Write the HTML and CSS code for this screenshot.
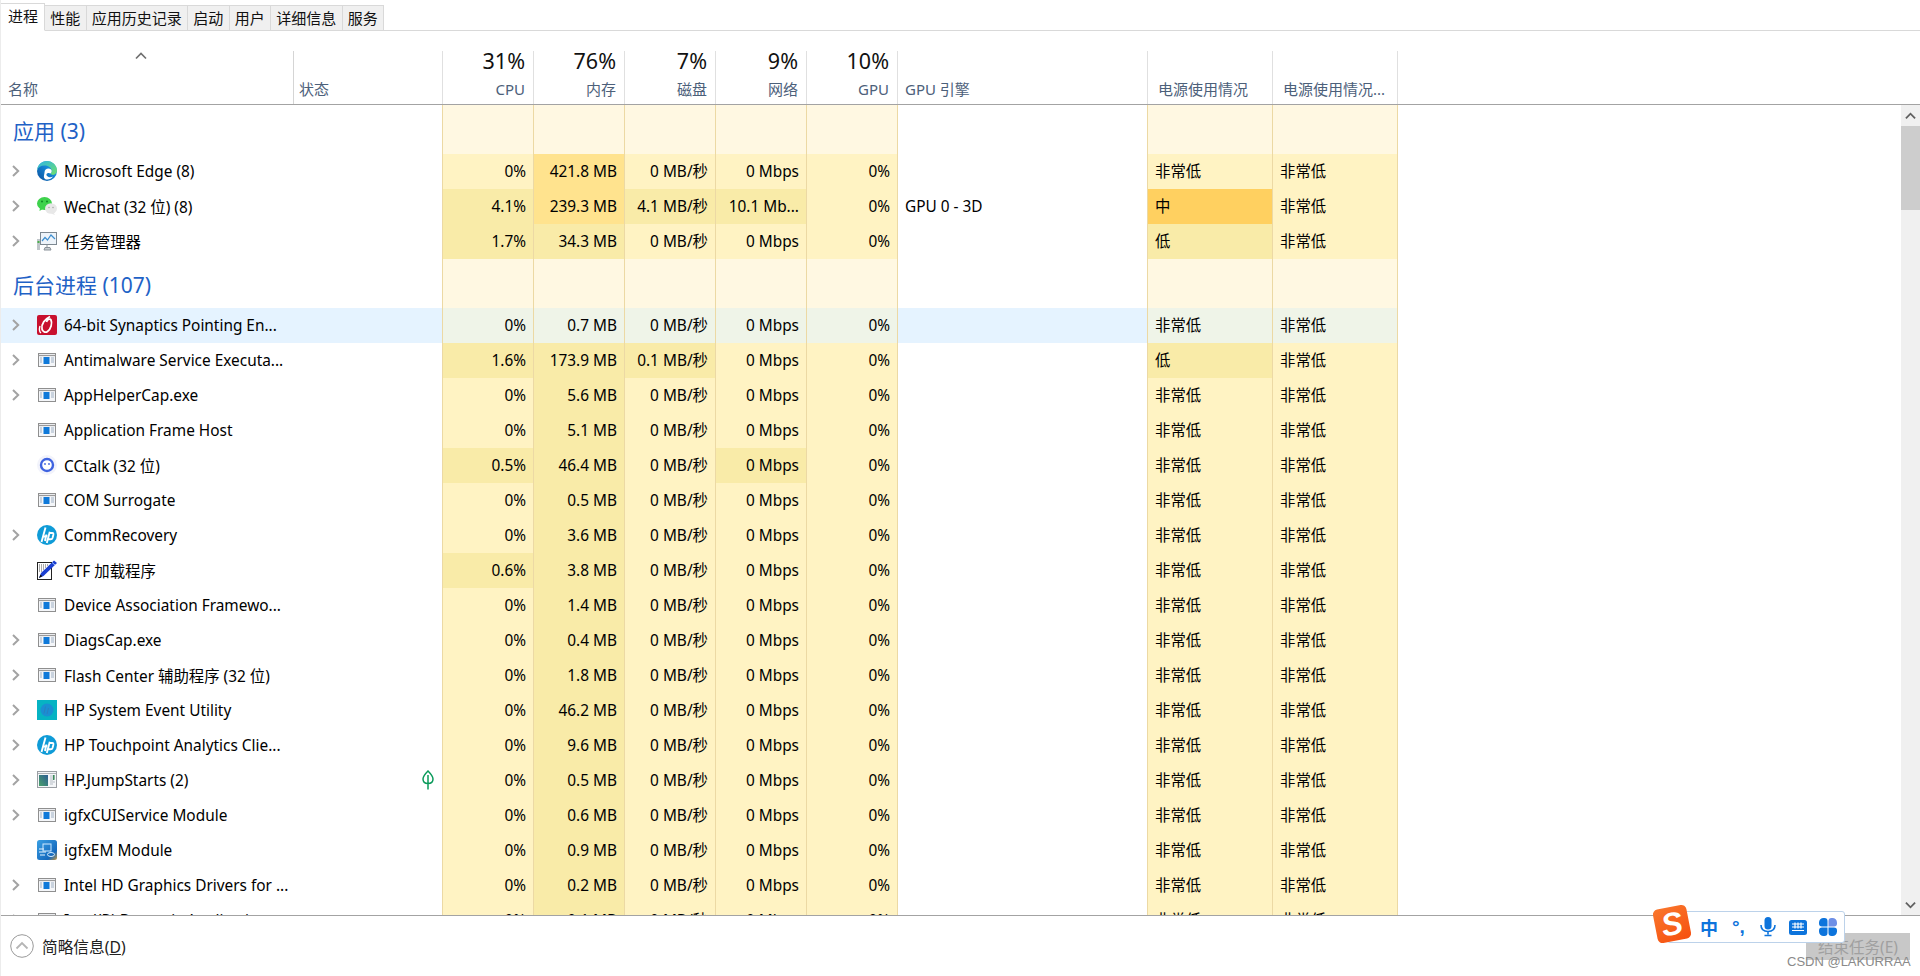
FILE: index.html
```html
<!DOCTYPE html>
<html lang="zh-CN">
<head>
<meta charset="utf-8">
<title>任务管理器</title>
<link rel="stylesheet" href="styles.css">
</head>
<body>
<svg class="defs" width="0" height="0">
  <defs>
    <linearGradient id="g-edge" x1="0" y1="1" x2="1" y2="0"><stop offset="0" stop-color="#0b4f9c"/><stop offset=".6" stop-color="#1689d8"/><stop offset="1" stop-color="#2fb8e6"/></linearGradient>
    <linearGradient id="g-edge2" x1="0" y1="0" x2="1" y2="1"><stop offset="0" stop-color="#2fb5e8"/><stop offset="1" stop-color="#6fe06a"/></linearGradient>
    <linearGradient id="g-jump" x1="0" y1="1" x2="1" y2="0"><stop offset="0" stop-color="#4aa06a"/><stop offset="1" stop-color="#2c5d92"/></linearGradient>
    <linearGradient id="g-igfx" x1="0" y1="0" x2="1" y2="1"><stop offset="0" stop-color="#3aa0e4"/><stop offset=".75" stop-color="#1569bd"/><stop offset="1" stop-color="#c9953a"/></linearGradient>
    <symbol id="chev" viewBox="0 0 10 14"><path d="M2 2l5.2 5L2 12" fill="none" stroke="#a3a3a3" stroke-width="2"/></symbol>
    <symbol id="i-win" viewBox="0 0 20 20">
      <rect x="1.500" y="3.500" width="17" height="13" fill="#f4f6f9" stroke="#8f8f8f"/>
      <path d="M1.500 5.500h17" stroke="#9a9a9a" stroke-width="1.200"/>
      <rect x="6.500" y="7" width="6" height="7" fill="#0f79d9"/>
      <path d="M3 8h2M3 10h2M3 12h2M14 8h3M14 10h3M14 12h3" stroke="#9fb0c4"/>
    </symbol>
    <symbol id="i-edge" viewBox="0 0 20 20">
      <circle cx="10" cy="10" r="10" fill="url(#g-edge)"/>
      <path d="M10 0C4.500 0 .4 4 0 9.500c1-3.200 4-5 7.500-5 4.500 0 7.200 2.700 7.200 5.500 0 1-.5 2-1.400 2.800 1 1 2.500 1.400 3.700 1 1.800-.7 3-2.300 3-4.800C20 4.500 15.500 0 10 0z" fill="url(#g-edge2)"/>
      <path d="M7.500 11.500c0-2.500 1.800-4 4-4 1.800 0 3.200 1.200 3.200 2.500 0 2-1.600 2.600-1.600 2.600s-1-.8-2.600-.4c-1.200.3-1.500 1.600-.4 2.800 1.500 1.500 4 1.800 6 .6-1.800 2.300-4.500 3.400-7.200 2.800C5.500 17 7.500 13.500 7.500 11.500z" fill="#fff"/>
    </symbol>
    <symbol id="i-wechat" viewBox="0 0 20 20">
      <ellipse cx="7.500" cy="7.500" rx="7.500" ry="6.500" fill="#3ed24c"/>
      <path d="M3 11.500l-.5 3.500 4-2.500z" fill="#3ed24c"/>
      <circle cx="5" cy="5.500" r="1" fill="#0f8a25"/><circle cx="10" cy="5.500" r="1" fill="#0f8a25"/>
      <ellipse cx="14" cy="12.500" rx="6" ry="5.200" fill="#e8e8e8"/>
      <path d="M16.500 16.500l1.500 2.500-4-1.500z" fill="#e8e8e8"/>
      <circle cx="12" cy="11.500" r=".8" fill="#aaa"/><circle cx="16" cy="11.500" r=".8" fill="#aaa"/>
    </symbol>
    <symbol id="i-tm" viewBox="0 0 20 20">
      <rect x="3.500" y="1.500" width="16" height="12" fill="#eef4fa" stroke="#7d8891"/>
      <path d="M5 10l3-3.500 2.500 2.500L14 4l4 4" fill="none" stroke="#3f8fd0" stroke-width="1.200"/>
      <path d="M10 13.500v3M7 19h7l-1-2.500H8z" stroke="#8a9299" fill="#c9ced2"/>
      <rect x="0" y="8" width="3" height="11" fill="#bfc5c9"/><rect x="0.500" y="10" width="2" height="2" fill="#48b04a"/>
    </symbol>
    <symbol id="i-syn" viewBox="0 0 20 20">
      <rect width="20" height="20" rx="2" fill="#c8102e"/>
      <path d="M13 1.500C8 4 4 9 5 14c.6 3 3.500 4 5.500 2.500C14 14 15.500 8 14 5c-1-2-3.500-.5-4.500 2" fill="none" stroke="#fff" stroke-width="1.800"/>
      <path d="M4 18c-2-1.500-2-4-1-7" fill="none" stroke="#fff" stroke-width="1.400"/>
    </symbol>
    <symbol id="i-cc" viewBox="0 0 20 20">
      <circle cx="10" cy="10" r="10" fill="#f2f3fb"/>
      <circle cx="10" cy="10" r="6" fill="#fff" stroke="#3f63e0" stroke-width="2.400"/>
      <circle cx="8" cy="9" r=".9" fill="#3f63e0"/><circle cx="12" cy="9" r=".9" fill="#3f63e0"/>
    </symbol>
    <symbol id="i-hp" viewBox="0 0 20 20">
      <circle cx="10" cy="10" r="10" fill="#0f9bd7"/>
      <path d="M8.500 2.500L4.500 17M5.900 11.500h2.600c1.300 0 1-1 .8-1.800L8 16M12.800 6.800L9.800 18M12.500 8h2.800c1.200 0 1.200 1 1 2l-.8 3c-.3 1-.8 1.300-1.800 1.300h-2.200" fill="none" stroke="#fff" stroke-width="1.900"/>
    </symbol>
    <symbol id="i-ctf" viewBox="0 0 20 20">
      <rect x=".5" y="2.500" width="14" height="17" fill="#fff" stroke="#222"/>
      <path d="M2 5h10M2 7h8M2 9h6M2 11h4" stroke="#555" stroke-dasharray="1 1"/>
      <path d="M2 18l2-5L17 0.500l3 2.500L6.500 16z" fill="#1b3fd0"/>
      <path d="M15 2.500l3 2.500" stroke="#9cc0ff"/><path d="M2 18l1.500-3.500 1.800 1.800z" fill="#111"/>
    </symbol>
    <symbol id="i-hpsys" viewBox="0 0 20 20">
      <rect width="20" height="20" fill="#06b3c3"/>
      <circle cx="10" cy="10" r="6.500" fill="#1a8fd2"/>
      <path d="M8.500 6.500L7 13.500M11.500 8L10 14" stroke="#2a7fc0"/>
    </symbol>
    <symbol id="i-jump" viewBox="0 0 20 20">
      <rect x=".5" y="1.500" width="19" height="16" fill="#f4f6f8" stroke="#9a9ea3"/>
      <path d="M1 3.500h18" stroke="#b0b4b8"/>
      <rect x="2" y="5" width="9" height="11" fill="url(#g-jump)"/>
      <path d="M13 6h5M13 8h5M13 10h3M13 12h5M13 14h3" stroke="#b5bcc4"/><rect x="16" y="5" width="1.500" height="5" fill="#3c8c5a"/>
    </symbol>
    <symbol id="i-igfx" viewBox="0 0 20 20">
      <rect width="20" height="20" rx="2.500" fill="url(#g-igfx)"/>
      <rect x="6" y="4" width="8" height="7" fill="none" stroke="#cfeaff"/>
      <path d="M2 9h5M2 12h7M3 15h5" stroke="#e6f4ff"/>
      <ellipse cx="14" cy="14.500" rx="3.500" ry="2" fill="none" stroke="#d8eeff"/>
    </symbol>
  </defs>
</svg>

<div class="app">
  <nav class="tabs">
    <span class="tab active">进程</span><span class="tab">性能</span><span class="tab">应用历史记录</span><span class="tab">启动</span><span class="tab">用户</span><span class="tab">详细信息</span><span class="tab">服务</span>
  </nav>

  <div class="header cols">
    <div class="hd hd-name">
      <svg class="sort" viewBox="0 0 12 8"><path d="M1 6.500l5-5 5 5" fill="none" stroke="#707070" stroke-width="1.700"/></svg>
      <span class="lbl">名称</span>
    </div>
    <div class="hd hd-left hd-status"><span class="lbl">状态</span></div>
    <div class="hd hd-num"><span class="pct">31%</span><span class="lbl">CPU</span></div>
    <div class="hd hd-num"><span class="pct">76%</span><span class="lbl">内存</span></div>
    <div class="hd hd-num"><span class="pct">7%</span><span class="lbl">磁盘</span></div>
    <div class="hd hd-num"><span class="pct">9%</span><span class="lbl">网络</span></div>
    <div class="hd hd-num"><span class="pct">10%</span><span class="lbl">GPU</span></div>
    <div class="hd hd-left"><span class="lbl">GPU 引擎</span></div>
    <div class="hd hd-left hd-power"><span class="lbl">电源使用情况</span></div>
    <div class="hd hd-left hd-power hd-last"><span class="lbl">电源使用情况...</span></div>
  </div>

  <div class="body">
    <div class="rows">
      <div class="row grp cols"><div class="name"><span class="grp-title">应用 (3)</span></div><div></div><div class="c"></div><div class="c"></div><div class="c"></div><div class="c"></div><div class="c"></div><div class="c eng"></div><div class="c"></div><div class="c last"></div></div>

      <div class="row cols"><div class="name"><svg class="exp"><use href="#chev"/></svg><svg class="ico"><use href="#i-edge"/></svg><span class="nm">Microsoft Edge (8)</span></div><div></div><div class="c n">0%</div><div class="c n d">421.8 MB</div><div class="c n">0 MB/秒</div><div class="c n">0 Mbps</div><div class="c n">0%</div><div class="c eng"></div><div class="c t">非常低</div><div class="c t last">非常低</div></div>

      <div class="row cols"><div class="name"><svg class="exp"><use href="#chev"/></svg><svg class="ico"><use href="#i-wechat"/></svg><span class="nm">WeChat (32 位) (8)</span></div><div></div><div class="c n m">4.1%</div><div class="c n d">239.3 MB</div><div class="c n m">4.1 MB/秒</div><div class="c n m">10.1 Mb...</div><div class="c n">0%</div><div class="c eng t">GPU 0 - 3D</div><div class="c t o">中</div><div class="c t last">非常低</div></div>

      <div class="row cols"><div class="name"><svg class="exp"><use href="#chev"/></svg><svg class="ico"><use href="#i-tm"/></svg><span class="nm">任务管理器</span></div><div></div><div class="c n m">1.7%</div><div class="c n m">34.3 MB</div><div class="c n">0 MB/秒</div><div class="c n">0 Mbps</div><div class="c n">0%</div><div class="c eng"></div><div class="c t m">低</div><div class="c t last">非常低</div></div>

      <div class="row grp cols"><div class="name"><span class="grp-title">后台进程 (107)</span></div><div></div><div class="c"></div><div class="c"></div><div class="c"></div><div class="c"></div><div class="c"></div><div class="c eng"></div><div class="c"></div><div class="c last"></div></div>

      <div class="row hov cols"><div class="name"><svg class="exp"><use href="#chev"/></svg><svg class="ico"><use href="#i-syn"/></svg><span class="nm">64-bit Synaptics Pointing En...</span></div><div></div><div class="c n">0%</div><div class="c n">0.7 MB</div><div class="c n">0 MB/秒</div><div class="c n">0 Mbps</div><div class="c n">0%</div><div class="c eng"></div><div class="c t">非常低</div><div class="c t last">非常低</div></div>

      <div class="row cols"><div class="name"><svg class="exp"><use href="#chev"/></svg><svg class="ico"><use href="#i-win"/></svg><span class="nm">Antimalware Service Executa...</span></div><div></div><div class="c n m">1.6%</div><div class="c n m">173.9 MB</div><div class="c n m">0.1 MB/秒</div><div class="c n">0 Mbps</div><div class="c n">0%</div><div class="c eng"></div><div class="c t m">低</div><div class="c t last">非常低</div></div>

      <div class="row cols"><div class="name"><svg class="exp"><use href="#chev"/></svg><svg class="ico"><use href="#i-win"/></svg><span class="nm">AppHelperCap.exe</span></div><div></div><div class="c n">0%</div><div class="c n m">5.6 MB</div><div class="c n">0 MB/秒</div><div class="c n">0 Mbps</div><div class="c n">0%</div><div class="c eng"></div><div class="c t">非常低</div><div class="c t last">非常低</div></div>

      <div class="row cols"><div class="name"><span class="exp"></span><svg class="ico"><use href="#i-win"/></svg><span class="nm">Application Frame Host</span></div><div></div><div class="c n">0%</div><div class="c n m">5.1 MB</div><div class="c n">0 MB/秒</div><div class="c n">0 Mbps</div><div class="c n">0%</div><div class="c eng"></div><div class="c t">非常低</div><div class="c t last">非常低</div></div>

      <div class="row cols"><div class="name"><span class="exp"></span><svg class="ico"><use href="#i-cc"/></svg><span class="nm">CCtalk (32 位)</span></div><div></div><div class="c n m">0.5%</div><div class="c n m">46.4 MB</div><div class="c n">0 MB/秒</div><div class="c n m">0 Mbps</div><div class="c n">0%</div><div class="c eng"></div><div class="c t">非常低</div><div class="c t last">非常低</div></div>

      <div class="row cols"><div class="name"><span class="exp"></span><svg class="ico"><use href="#i-win"/></svg><span class="nm">COM Surrogate</span></div><div></div><div class="c n">0%</div><div class="c n m">0.5 MB</div><div class="c n">0 MB/秒</div><div class="c n">0 Mbps</div><div class="c n">0%</div><div class="c eng"></div><div class="c t">非常低</div><div class="c t last">非常低</div></div>

      <div class="row cols"><div class="name"><svg class="exp"><use href="#chev"/></svg><svg class="ico"><use href="#i-hp"/></svg><span class="nm">CommRecovery</span></div><div></div><div class="c n">0%</div><div class="c n m">3.6 MB</div><div class="c n">0 MB/秒</div><div class="c n">0 Mbps</div><div class="c n">0%</div><div class="c eng"></div><div class="c t">非常低</div><div class="c t last">非常低</div></div>

      <div class="row cols"><div class="name"><span class="exp"></span><svg class="ico"><use href="#i-ctf"/></svg><span class="nm">CTF 加载程序</span></div><div></div><div class="c n m">0.6%</div><div class="c n m">3.8 MB</div><div class="c n">0 MB/秒</div><div class="c n">0 Mbps</div><div class="c n">0%</div><div class="c eng"></div><div class="c t">非常低</div><div class="c t last">非常低</div></div>

      <div class="row cols"><div class="name"><span class="exp"></span><svg class="ico"><use href="#i-win"/></svg><span class="nm">Device Association Framewo...</span></div><div></div><div class="c n">0%</div><div class="c n m">1.4 MB</div><div class="c n">0 MB/秒</div><div class="c n">0 Mbps</div><div class="c n">0%</div><div class="c eng"></div><div class="c t">非常低</div><div class="c t last">非常低</div></div>

      <div class="row cols"><div class="name"><svg class="exp"><use href="#chev"/></svg><svg class="ico"><use href="#i-win"/></svg><span class="nm">DiagsCap.exe</span></div><div></div><div class="c n">0%</div><div class="c n m">0.4 MB</div><div class="c n">0 MB/秒</div><div class="c n">0 Mbps</div><div class="c n">0%</div><div class="c eng"></div><div class="c t">非常低</div><div class="c t last">非常低</div></div>

      <div class="row cols"><div class="name"><svg class="exp"><use href="#chev"/></svg><svg class="ico"><use href="#i-win"/></svg><span class="nm">Flash Center 辅助程序 (32 位)</span></div><div></div><div class="c n">0%</div><div class="c n m">1.8 MB</div><div class="c n">0 MB/秒</div><div class="c n">0 Mbps</div><div class="c n">0%</div><div class="c eng"></div><div class="c t">非常低</div><div class="c t last">非常低</div></div>

      <div class="row cols"><div class="name"><svg class="exp"><use href="#chev"/></svg><svg class="ico"><use href="#i-hpsys"/></svg><span class="nm">HP System Event Utility</span></div><div></div><div class="c n">0%</div><div class="c n m">46.2 MB</div><div class="c n">0 MB/秒</div><div class="c n">0 Mbps</div><div class="c n">0%</div><div class="c eng"></div><div class="c t">非常低</div><div class="c t last">非常低</div></div>

      <div class="row cols"><div class="name"><svg class="exp"><use href="#chev"/></svg><svg class="ico"><use href="#i-hp"/></svg><span class="nm">HP Touchpoint Analytics Clie...</span></div><div></div><div class="c n">0%</div><div class="c n m">9.6 MB</div><div class="c n">0 MB/秒</div><div class="c n">0 Mbps</div><div class="c n">0%</div><div class="c eng"></div><div class="c t">非常低</div><div class="c t last">非常低</div></div>

      <div class="row cols"><div class="name"><svg class="exp"><use href="#chev"/></svg><svg class="ico"><use href="#i-jump"/></svg><span class="nm">HP.JumpStarts (2)</span></div><div class="status"><svg class="leaf" viewBox="0 0 12 20"><path d="M6 1C3 4 1 6 1 9c0 2.800 2.200 4.500 5 4.500S11 11.800 11 9c0-3-2-5-5-8zM6 5v14.500" fill="none" stroke="#0a9a5a" stroke-width="1.500"/></svg></div><div class="c n">0%</div><div class="c n m">0.5 MB</div><div class="c n">0 MB/秒</div><div class="c n">0 Mbps</div><div class="c n">0%</div><div class="c eng"></div><div class="c t">非常低</div><div class="c t last">非常低</div></div>

      <div class="row cols"><div class="name"><svg class="exp"><use href="#chev"/></svg><svg class="ico"><use href="#i-win"/></svg><span class="nm">igfxCUIService Module</span></div><div></div><div class="c n">0%</div><div class="c n m">0.6 MB</div><div class="c n">0 MB/秒</div><div class="c n">0 Mbps</div><div class="c n">0%</div><div class="c eng"></div><div class="c t">非常低</div><div class="c t last">非常低</div></div>

      <div class="row cols"><div class="name"><span class="exp"></span><svg class="ico"><use href="#i-igfx"/></svg><span class="nm">igfxEM Module</span></div><div></div><div class="c n">0%</div><div class="c n m">0.9 MB</div><div class="c n">0 MB/秒</div><div class="c n">0 Mbps</div><div class="c n">0%</div><div class="c eng"></div><div class="c t">非常低</div><div class="c t last">非常低</div></div>

      <div class="row cols"><div class="name"><svg class="exp"><use href="#chev"/></svg><svg class="ico"><use href="#i-win"/></svg><span class="nm">Intel HD Graphics Drivers for ...</span></div><div></div><div class="c n">0%</div><div class="c n m">0.2 MB</div><div class="c n">0 MB/秒</div><div class="c n">0 Mbps</div><div class="c n">0%</div><div class="c eng"></div><div class="c t">非常低</div><div class="c t last">非常低</div></div>

      <div class="row cols"><div class="name"><svg class="exp"><use href="#chev"/></svg><svg class="ico"><use href="#i-win"/></svg><span class="nm">Intel(R) Dynamic Application...</span></div><div></div><div class="c n">0%</div><div class="c n m">0.1 MB</div><div class="c n">0 MB/秒</div><div class="c n">0 Mbps</div><div class="c n">0%</div><div class="c eng"></div><div class="c t">非常低</div><div class="c t last">非常低</div></div>
    </div>

    <div class="scrollbar">
      <div class="sb-btn"><svg viewBox="0 0 12 8"><path d="M1 6.500l5-5 5 5" fill="none" stroke="#606060" stroke-width="2"/></svg></div>
      <div class="sb-thumb"></div>
      <div class="sb-track"></div>
      <div class="sb-btn"><svg viewBox="0 0 12 8"><path d="M1 1.500l5 5 5-5" fill="none" stroke="#606060" stroke-width="2"/></svg></div>
    </div>
  </div>

  <footer class="footer">
    <div class="brief">
      <svg class="brief-ico" viewBox="0 0 24 24"><circle cx="12" cy="12" r="11.300" fill="#fff" stroke="#9a9a9a"/><path d="M6.500 14.500L12 9l5.500 5.500" fill="none" stroke="#b5b5b5" stroke-width="1.800"/></svg>
      <span class="brief-txt">简略信息(<u>D</u>)</span>
    </div>
    <button class="end" type="button">结束任务(E)</button>
  </footer>

  <div class="ime">
    <span class="ime-logo"><span class="ime-s">S</span></span>
    <span class="ime-zh">中</span>
    <span class="ime-punct">°,</span>
    <svg class="ime-mic" viewBox="0 0 16 20"><rect x="4.500" y="0" width="7" height="12.500" rx="3.500" fill="#0d74dc"/><path d="M1 8c0 4.500 3 6.500 7 6.500s7-2 7-6.500M8 14.500v3M4.500 18.500h7" fill="none" stroke="#0d74dc" stroke-width="1.600"/></svg>
    <svg class="ime-kb" viewBox="0 0 18 15"><rect width="18" height="15" rx="2.500" fill="#0d74dc"/><path d="M3 4h12M3 7h12M3 10.500h12M6 2.500v6M9 2.500v6M12 2.500v6" stroke="#fff" stroke-width="1.200"/></svg>
    <svg class="ime-flower" viewBox="0 0 18 18"><path d="M0 4.500a4.500 4.500 0 0 1 4.500-4.500h1a3 3 0 0 1 3 3v5.500H3a3 3 0 0 1-3-3z" fill="#0d74dc"/><path d="M9.500 3a3 3 0 0 1 3-3h1A4.500 4.500 0 0 1 18 4.500v1a3 3 0 0 1-3 3H9.500z" fill="#6e8fe6"/><path d="M3 9.500h5.500V15a3 3 0 0 1-3 3h-1A4.500 4.500 0 0 1 0 13.500v-1a3 3 0 0 1 3-3z" fill="#0d74dc"/><path d="M9.500 9.500H15a3 3 0 0 1 3 3v1a4.500 4.500 0 0 1-4.500 4.500h-1a3 3 0 0 1-3-3z" fill="#0d74dc"/></svg>
  </div>
  <div class="watermark">CSDN @LAKURRAA</div>
</div>
</body>
</html>
```

FILE: styles.css
```css
* { box-sizing: border-box; }
html, body { margin: 0; padding: 0; height: 100%; background: #fff; }
body {
  font-family: "Noto Sans", "Noto Sans CJK SC", sans-serif;
  font-size: 15.4px;
  color: #000;
  overflow: hidden;
}
.defs { position: absolute; }

.app {
  position: relative;
  height: 976px;
  display: flex;
  flex-direction: column;
  border-left: 1px solid #ececec;
}

/* tabs */
.tabs {
  height: 31px;
  flex: none;
  display: flex;
  align-items: flex-end;
  border-bottom: 1px solid #d9d9d9;
}
.tab {
  height: 26px;
  line-height: 25px;
  padding: 0 5.250px;
  margin-bottom: -1px;
  background: #f0f0f0;
  border: 1px solid #d9d9d9;
  border-left: 0;
  font-size: 15px;
  white-space: nowrap;
  color: #111;
}
.tab.active {
  height: 28px;
  line-height: 25px;
  padding: 0 6px 0 7px;
  background: #fff;
  border-left: 0;
  border-bottom: 1px solid #fff;
}

/* shared column grid */
.cols {
  display: grid;
  grid-template-columns: 292px 149px 91px 91px 91px 91px 91px 250px 125px 126px;
}

/* header */
.header {
  flex: none;
  height: 74px;
  padding-top: 20px;
  border-bottom: 1px solid #a3a3a3;
}
.hd {
  position: relative;
  display: flex;
  flex-direction: column;
  justify-content: flex-end;
  padding: 0 8px 3px 7px;
  border-left: 1px solid #e0e0e0;
  line-height: 24px;
}
.hd-name { border-left: 0; padding-left: 7px; }
.hd-num { align-items: flex-end; }
.hd-power { padding-left: 10px; }
.hd-last { border-right: 1px solid #e0e0e0; }
.hd-status { border-left: 1px solid #d5d5d5; padding-left: 5px; }
.lbl {
  color: #4c607a;
  font-size: 15px;
  white-space: nowrap;
}
.pct {
  font-size: 21.500px;
  line-height: 20px;
  margin-bottom: 6px;
  color: #111;
}
.sort {
  position: absolute;
  left: 134px;
  top: 1px;
  width: 12px;
  height: 8px;
}

/* body */
.body {
  flex: 1;
  min-height: 0;
  display: flex;
}
.rows {
  flex: 1;
  min-width: 0;
  overflow: hidden;
}
.row { height: 35px; }
.row.grp { height: 49px; }
.name {
  display: flex;
  align-items: center;
  padding-bottom: 1px;
  white-space: nowrap;
  overflow: hidden;
}
.exp {
  flex: none;
  width: 10px;
  height: 14px;
  margin: 0 0 0 10px;
}
.ico {
  flex: none;
  width: 20px;
  height: 20px;
  margin-left: 16px;
}
.nm { margin-left: 7px; }
.grp-title {
  margin-left: 12px;
  margin-top: 1px;
  font-size: 21px;
  color: #1f62c6;
}
.c {
  background: #fff3c3;
  border-left: 1px solid #ecd9a4;
  line-height: 36px;
  white-space: nowrap;
  overflow: hidden;
}
.c.n { text-align: right; padding-right: 7px; }
.c.t { padding-left: 7px; }
.c.last { border-right: 1px solid #ecd9a4; }
.c.m { background: #f9eba8; }
.c.d { background: #ffe38e; }
.c.o { background: #ffd060; }
.c.eng { background: #fff; }
.grp .c { background: #fff8e2; }
.grp .c.eng { background: #fff; }
.hov .name, .hov .name + div, .hov .c.eng { background: #e5f3ff; }
.hov .c { background: #eff4e8; }
.hov .c.eng { background: #e5f3ff; }
.status { position: relative; }
.leaf {
  position: absolute;
  left: 129px;
  top: 7px;
  width: 12px;
  height: 20px;
}

/* scrollbar */
.scrollbar {
  flex: none;
  width: 19px;
  display: flex;
  flex-direction: column;
  background: #f0f0f0;
}
.sb-btn {
  flex: none;
  height: 21px;
  display: flex;
  align-items: center;
  justify-content: center;
}
.sb-btn svg { width: 11px; height: 8px; }
.sb-thumb { flex: none; height: 84px; background: #cdcdcd; }
.sb-track { flex: 1; }

/* footer */
.footer {
  flex: none;
  height: 61px;
  border-top: 1px solid #a3a3a3;
  display: flex;
  align-items: center;
  justify-content: space-between;
  padding: 0 10px 0 9px;
}
.brief { display: flex; align-items: center; }
.brief-ico { width: 24px; height: 24px; }
.brief-txt { margin-left: 8px; font-size: 15.700px; color: #222; }
.end {
  width: 104px;
  height: 27px;
  border: 0;
  padding: 0;
  background: #c8c8c8;
  color: #a0a0a0;
  font: 15.500px "Noto Sans", "Noto Sans CJK SC", sans-serif;
}

/* floating input-method bar */
.ime {
  position: absolute;
  left: 1666px;
  top: 911px;
  width: 178px;
  height: 32px;
  background: #fff;
  border: 1px solid #bcd2ea;
  border-radius: 3px;
  display: flex;
  align-items: center;
}
.ime-logo {
  position: absolute;
  left: -13px;
  top: -5px;
  width: 34px;
  height: 34px;
  border-radius: 5px;
  transform: rotate(-11deg);
  background: linear-gradient(160deg, #f9762c, #f6500f);
  display: flex;
  align-items: center;
  justify-content: center;
}
.ime-s {
  color: #fff;
  font: italic 900 32px/33px "Liberation Sans", sans-serif;
}
.ime-zh {
  margin-left: 32px;
  font: 700 18px/20px "Noto Sans CJK SC", sans-serif;
  color: #0d74dc;
}
.ime-punct {
  margin-left: 14px;
  width: 18px;
  font: 700 19px/20px "Liberation Sans", sans-serif;
  color: #0d74dc;
}
.ime-mic { width: 16px; height: 20px; margin-left: 10px; }
.ime-kb { width: 18px; height: 15px; margin-left: 13px; }
.ime-flower { width: 18px; height: 18px; margin-left: 12px; }
.watermark {
  position: absolute;
  left: 1786px;
  top: 954px;
  font: 13px/16px "Liberation Sans", sans-serif;
  color: #8a8a8a;
  white-space: nowrap;
}
```
